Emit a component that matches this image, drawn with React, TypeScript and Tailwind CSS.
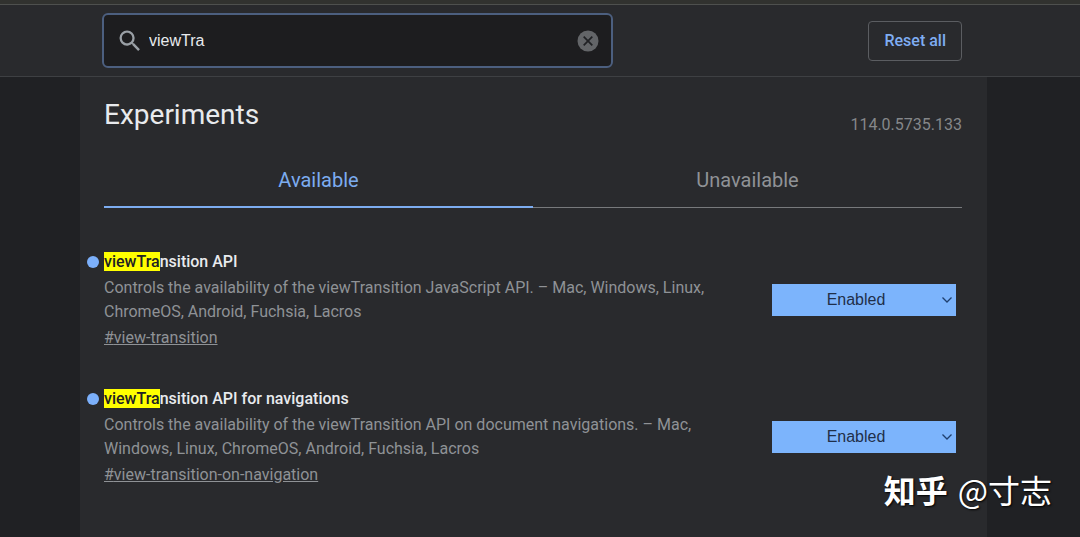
import React, { useState } from "react";

const experiments = [
    {
        id: 'view-transition',
        match: 'viewTra',
        rest: 'nsition API',
        description: 'Controls the availability of the viewTransition JavaScript API. – Mac, Windows, Linux, ChromeOS, Android, Fuchsia, Lacros',
    },
    {
        id: 'view-transition-on-navigation',
        match: 'viewTra',
        rest: 'nsition API for navigations',
        description: 'Controls the availability of the viewTransition API on document navigations. – Mac, Windows, Linux, ChromeOS, Android, Fuchsia, Lacros',
    },
];

const SearchBar = () => {
    const [query, setQuery] = useState('viewTra');

    return (
        <div className="flex h-[55px] w-[511px] items-center rounded-md border-2 border-[#4c5f7f] bg-[#1d1d1f] px-3">
            <svg viewBox="0 0 24 24" className="h-7 w-7 shrink-0" fill="#9aa0a6" aria-hidden="true">
                <path d="M15.5 14h-.79l-.28-.27A6.471 6.471 0 0 0 16 9.5 6.5 6.5 0 1 0 9.500 16c1.610 0 3.090-.590 4.230-1.570l.27.28v.79l5 4.990L20.490 19l-4.990-5zm-6 0C7.010 14 5 11.990 5 9.500S7.010 5 9.500 5 14 7.010 14 9.500 11.990 14 9.500 14z" />
            </svg>
            <input
                type="text"
                aria-label="Search flags"
                value={query}
                onChange={(e) => setQuery(e.target.value)}
                className="ml-1 min-w-0 flex-1 bg-transparent pl-px font-['Liberation_Sans',Arial,sans-serif] text-base text-[#e8eaed] outline-none"
            />
            <button type="button" aria-label="Clear search" onClick={() => setQuery('')}>
                <svg viewBox="0 0 22 22" className="h-[22px] w-[22px]">
                    <circle cx="11" cy="11" r="10.500" fill="#636568" />
                    <path d="M6.700 6.700l8.600 8.600M15.300 6.700l-8.600 8.600" stroke="#202124" strokeWidth="1.700" />
                </svg>
            </button>
        </div>
    );
};

const Experiment = ({ item }: { item: (typeof experiments)[number] }) => {
    return (
        <div className="flex items-center justify-between">
            <div className="w-[612px]">
                <h3 className="relative text-base leading-6 font-medium text-[#e8eaed]">
                    {/* marks a flag changed from its default */}
                    <span className="absolute top-1.5 -left-[17px] h-3 w-3 rounded-full bg-[#7cb0fb]" />
                    <mark className="bg-[#ffff00] text-[#202124]">{item.match}</mark>
                    {item.rest}
                </h3>
                <p id={item.id} className="mt-0.5 text-base leading-6 text-[#8f9296]">{item.description}</p>
                <a href={`#${item.id}`} className="mt-0.5 block w-fit text-base leading-6 text-[#8f9296] underline">
                    #{item.id}
                </a>
            </div>
            <div className="relative mr-1.5">
                <select
                    aria-label={`${item.match}${item.rest}`}
                    aria-describedby={item.id}
                    defaultValue="Enabled"
                    className="h-8 w-[184px] appearance-none bg-[#7cb4fc] pr-4 text-center font-['Liberation_Sans',Arial,sans-serif] text-base text-[#1f2f49]"
                >
                    <option>Default</option>
                    <option>Enabled</option>
                    <option>Disabled</option>
                </select>
                <svg viewBox="0 0 10 6" className="pointer-events-none absolute top-[13px] right-1 h-1.5 w-2.5" fill="none" stroke="#1f3f6e" strokeWidth="1.300">
                    <path d="M.5.5L5 5L9.500.5" />
                </svg>
            </div>
        </div>
    );
};

const App = () => {
    const [tab, setTab] = useState('Available');

    return (
        <div className="flex min-h-screen flex-col bg-[#202124] font-[Roboto,sans-serif]">
            <div className="h-1 bg-[#31322f]" />
            <header className="flex h-[73px] items-center justify-between border-y border-t-[#4e504e] border-b-[#3e4043] bg-[#292a2d] pr-[118px] pl-[102px]">
                <SearchBar />
                <button type="button" className="h-10 rounded border border-[#5b5d61] px-[15px] text-base font-medium text-[#7fadf2]">
                    Reset all
                </button>
            </header>

            <div className="flex flex-1 flex-col pr-[93px] pl-20">
                <main className="flex-1 bg-[#292a2d] pt-4 pr-[25px] pl-6">
                    <div className="flex items-start justify-between">
                        <h1 className="text-[28px] leading-11 text-[#e8eaed]">Experiments</h1>
                        <span className="mt-5 text-base leading-6 text-[#85878a]">114.0.5735.133</span>
                    </div>

                    <div role="tablist" className="mt-4 grid grid-cols-2">
                        {['Available', 'Unavailable'].map((name) => (
                            <button
                                key={name}
                                type="button"
                                role="tab"
                                aria-selected={tab === name}
                                onClick={() => setTab(name)}
                                className={
                                    tab === name
                                        ? "h-[55px] border-b-2 border-[#7cacf0] text-xl text-[#7cacf0]"
                                        : "h-[55px] border-b border-[#77797c] text-xl text-[#8f9296]"
                                }
                            >
                                {name}
                            </button>
                        ))}
                    </div>

                    <div className="mt-[42px] flex flex-col gap-[37px] pb-10">
                        {experiments.map((item) => (
                            <Experiment key={item.id} item={item} />
                        ))}
                    </div>
                </main>
            </div>

            <div className="absolute right-7 bottom-7 flex items-center gap-2.5 font-['Noto_Sans_CJK_SC',sans-serif] text-[32px] leading-10 text-white [text-shadow:1px_1px_2px_#000]">
                <span className="font-bold">知乎</span>
                <span>@寸志</span>
            </div>
        </div>
    );
};

export default App;
